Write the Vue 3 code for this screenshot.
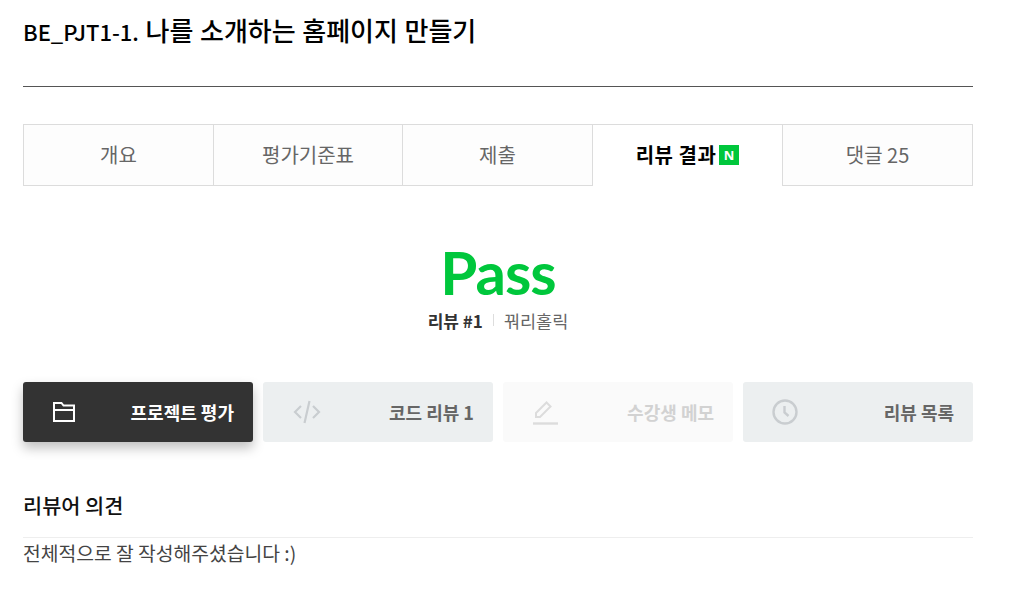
<script setup>
const tabs = [
  { label: '개요' },
  { label: '평가기준표' },
  { label: '제출' },
  { label: '리뷰 결과', active: true, badge: 'N' },
  { label: '댓글 25' }
]
</script>

<template>
  <div class="page">
    <h1 class="title"><span class="latin">BE_PJT1-1.</span> 나를 소개하는 홈페이지 만들기</h1>
    <nav class="tabs">
      <div v-for="t in tabs" :key="t.label" class="tab" :class="{ active: t.active }">
        <span>{{ t.label }}</span>
        <span v-if="t.badge" class="badge">{{ t.badge }}</span>
      </div>
    </nav>
    <section class="result">
      <div class="pass">Pass</div>
      <div class="meta">
        <strong>리뷰 #1</strong>
        <i class="sep"></i>
        <span>꿔리홀릭</span>
      </div>
    </section>
    <div class="actions">
      <button class="act dark">
        <svg width="24" height="22" viewBox="0 0 24 22" fill="none" stroke="currentColor" stroke-width="2">
          <path d="M2 20V2h7.500l2 2.500H22V20z M2 9h20" />
        </svg>
        <span>프로젝트 평가</span>
      </button>
      <button class="act">
        <svg width="30" height="24" viewBox="0 0 30 24" fill="none" stroke="#c9cdd0" stroke-width="2.200">
          <path d="M9 6l-6 6 6 6M21 6l6 6-6 6M17.500 1l-5 22" />
        </svg>
        <span>코드 리뷰 1</span>
      </button>
      <button class="act faded">
        <svg width="26" height="26" viewBox="0 0 26 26" fill="none" stroke="#dcdcdc" stroke-width="2">
          <path d="M4 18v-4L14.500 3.500l4 4L8 18z" />
          <path d="M1 24.500h25" stroke-width="2.400" />
        </svg>
        <span>수강생 메모</span>
      </button>
      <button class="act">
        <svg width="26" height="26" viewBox="0 0 26 26" fill="none" stroke="#c9cdd0" stroke-width="2.400">
          <circle cx="13" cy="13" r="11.500" />
          <path d="M12.500 7v6.500l4 3.500" />
        </svg>
        <span>리뷰 목록</span>
      </button>
    </div>
    <h2 class="sub">리뷰어 의견</h2>
    <p class="opinion">전체적으로 잘 작성해주셨습니다 :)</p>
  </div>
</template>

<style scoped>
.page {
  width: 950px;
  margin-left: 23px;
  font-family: "Noto Sans CJK KR", "Noto Sans", sans-serif;
  color: #333;
}
.title {
  margin: 0;
  height: 87px;
  box-sizing: border-box;
  padding-top: 12px;
  border-bottom: 1px solid #555;
  font-size: 26px;
  line-height: 36px;
  font-weight: 500;
  word-spacing: 0.750px;
  color: #000;
}
.latin {
  font-size: 22px;
}
.tabs {
  display: grid;
  grid-template-columns: 189px 189px 190px 190px 1fr;
  margin-top: 37px;
  height: 62px;
  box-sizing: border-box;
  border: 1px solid #dcdcdc;
  background: #fdfdfd;
}
.tab {
  display: flex;
  align-items: center;
  justify-content: center;
  gap: 3px;
  font-size: 20px;
  color: #666;
  border-left: 1px solid #dcdcdc;
  margin-bottom: -1px;
  padding-bottom: 3px;
}
.tab:first-child { border-left: 0; }
.tab.active {
  background: #fff;
  color: #000;
  font-weight: 700;
  padding-bottom: 2px;
  letter-spacing: 0.500px;
}
.badge {
  display: flex;
  align-items: center;
  justify-content: center;
  width: 20px;
  height: 20px;
  background: #00c73c;
  color: #fff;
  font-size: 13px;
  font-weight: 700;
  font-family: "Noto Sans", sans-serif;
}
.result {
  display: flex;
  flex-direction: column;
  align-items: center;
  margin-top: 52px;
}
.pass {
  height: 68px;
  font-family: Lato, sans-serif;
  font-size: 60px;
  line-height: 68px;
  font-weight: 700;
  letter-spacing: -1px;
  color: #00c73c;
}
.meta {
  display: flex;
  align-items: center;
  height: 28px;
  font-size: 17.500px;
  color: #666;
}
.meta strong { font-size: 17px; font-weight: 700; color: #333; }
.sep {
  width: 1px;
  height: 12px;
  margin: 0 10px;
  background: #ddd;
}
.actions {
  display: grid;
  grid-template-columns: repeat(4, 230px);
  gap: 10px;
  margin-top: 48px;
}
.act {
  display: flex;
  align-items: center;
  justify-content: space-between;
  height: 60px;
  padding: 0 19px 0 29px;
  border: 0;
  border-radius: 3px;
  background: #ecefF0;
  color: #666;
  font-family: inherit;
  font-size: 18px;
  font-weight: 700;
}
.act.dark {
  background: #333;
  color: #fff;
  box-shadow: 0 6px 12px rgba(0, 0, 0, 0.25);
}
.act.faded {
  background: #fafafa;
  color: #d2d2d2;
}
.sub {
  margin: 47px 0 0;
  height: 32px;
  font-size: 20.800px;
  line-height: 32px;
  font-weight: 500;
  color: #111;
  border-bottom: 1px solid #eee;
  padding-bottom: 16px;
  box-sizing: content-box;
}
.opinion {
  margin: 2px 0 0;
  font-size: 19.300px;
  line-height: 26px;
  color: #444;
}
</style>
